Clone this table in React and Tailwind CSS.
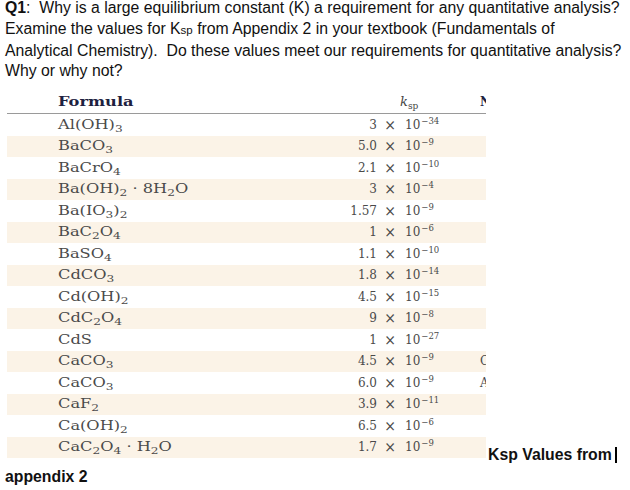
import React from 'react';

const rows = [
	{ f: ['Al(OH)', ['3']], m: '3', e: '34' },
	{ f: ['BaCO', ['3']], m: '5.0', e: '9' },
	{ f: ['BaCrO', ['4']], m: '2.1', e: '10' },
	{ f: ['Ba(OH)', ['2'], ' · 8H', ['2'], 'O'], m: '3', e: '4' },
	{ f: ['Ba(IO', ['3'], ')', ['2']], m: '1.57', e: '9' },
	{ f: ['BaC', ['2'], 'O', ['4']], m: '1', e: '6' },
	{ f: ['BaSO', ['4']], m: '1.1', e: '10' },
	{ f: ['CdCO', ['3']], m: '1.8', e: '14' },
	{ f: ['Cd(OH)', ['2']], m: '4.5', e: '15' },
	{ f: ['CdC', ['2'], 'O', ['4']], m: '9', e: '8' },
	{ f: ['CdS'], m: '1', e: '27' },
	{ f: ['CaCO', ['3']], m: '4.5', e: '9', x: 'C' },
	{ f: ['CaCO', ['3']], m: '6.0', e: '9', x: 'A' },
	{ f: ['CaF', ['2']], m: '3.9', e: '11' },
	{ f: ['Ca(OH)', ['2']], m: '6.5', e: '6' },
	{ f: ['CaC', ['2'], 'O', ['4'], ' · H', ['2'], 'O'], m: '1.7', e: '9' },
];

const Formula = ({ parts }) => (
	<span className="inline-block origin-left scale-x-[1.35] whitespace-nowrap">
		{parts.map((p, i) =>
			Array.isArray(p) ? (
				<sub key={i} className="relative top-[3px] text-[9px]">
					{p[0]}
				</sub>
			) : (
				<span key={i}>{p}</span>
			)
		)}
	</span>
);

const KspTable = () => (
	<div className="inline-block align-baseline w-[481px] overflow-hidden mt-[8px] mb-[2px] font-['DejaVu_Serif'] text-[12px] leading-none text-[#4a4a4a]">
		{/* header */}
		<div className="flex items-center h-[24px] ml-[2px] border-b border-[#9a9a9a]">
			<div className="shrink-0 w-[301px] pl-[51px] font-bold text-[#1d2140]">
				<Formula parts={['Formula']} />
			</div>
			<div className="shrink-0 w-[92px]" />
			<div className="shrink-0 w-[80px] italic text-[13px] text-[#444]">
				k<sub className="relative top-[3px] text-[9px] not-italic">sp</sub>
			</div>
			<div className="shrink-0 font-bold text-[#1d2140]">N</div>
		</div>
		{rows.map((r, i) => (
			<div
				key={i}
				className={`flex items-center h-[21.5px] ml-[2px] ${i % 2 === 1 ? 'bg-[#fbf3e7]' : 'bg-white'}`}>
				<div className="shrink-0 w-[301px] pl-[51px]">
					<Formula parts={r.f} />
				</div>
				<div className="shrink-0 w-[69px] text-right">{r.m}</div>
				<div className="shrink-0 w-[26px] text-center text-[14px]">×</div>
				<div className="shrink-0 w-[77px] pl-[2px] whitespace-nowrap">
					10
					<sup className="relative -top-[5px] ml-[1px] text-[8.5px]">−{r.e}</sup>
				</div>
				<div className="shrink-0 w-[8px]">{r.x}</div>
			</div>
		))}
	</div>
);

export default function App() {
	return (
		<div className="w-[630px] h-[490px] overflow-hidden bg-white px-[5px] font-['Liberation_Sans',sans-serif] text-[15.8px] leading-[20.8px] text-[#111]">
			<p className="-mt-[2px]">
				<b>Q1</b>:&nbsp; Why is a large equilibrium constant (K) a requirement for any quantitative analysis?
				<br />
				Examine the values for K<span className="text-[11.5px]">sp</span> from Appendix 2 in your textbook (Fundamentals of
				<br />
				Analytical Chemistry).&nbsp; Do these values meet our requirements for quantitative analysis?
				<br />
				Why or why not?
			</p>
			<div className="leading-[22px]">
				<KspTable />
				<b className="ml-[2px]">Ksp Values from</b>
				<span className="inline-block align-[-3px] ml-[3px] w-[2px] h-[16px] bg-black" />
				<br />
				<b>appendix 2</b>
			</div>
		</div>
	);
}
